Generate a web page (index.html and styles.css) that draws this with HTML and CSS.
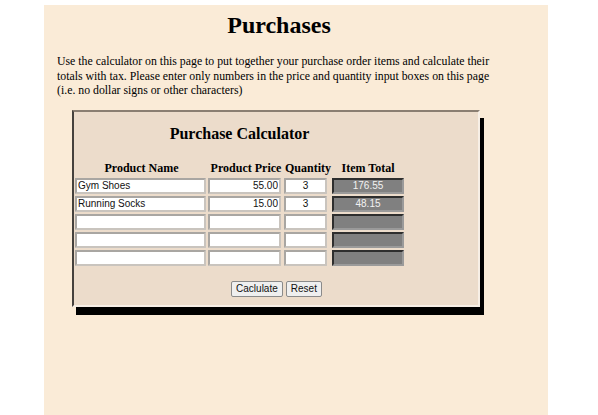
FILE: index.html
```html
<!DOCTYPE html>
<html>
<head>
<meta charset="utf-8">
<title>Purchases</title>
<link rel="stylesheet" href="styles.css">
</head>
<body>
<div class="page">
  <div class="content">
    <h1 class="title">Purchases</h1>
    <p class="intro">Use the calculator on this page to put together your purchase order items and calculate their totals with tax. Please enter only numbers in the price and quantity input boxes on this page (i.e. no dollar signs or other characters)</p>
  </div>
  <div class="calc">
    <div class="calc-table">
      <h2 class="calc-title">Purchase Calculator</h2>
      <div class="grid">
        <div class="th">Product Name</div>
        <div class="th">Product Price</div>
        <div class="th">Quantity</div>
        <div class="th">Item Total</div>

        <input class="in name" type="text" value="Gym Shoes">
        <input class="in price" type="text" value="55.00">
        <input class="in qty" type="text" value="3">
        <input class="in total" type="text" value="176.55" readonly>

        <input class="in name" type="text" value="Running Socks">
        <input class="in price" type="text" value="15.00">
        <input class="in qty" type="text" value="3">
        <input class="in total" type="text" value="48.15" readonly>

        <input class="in name" type="text" value="">
        <input class="in price" type="text" value="">
        <input class="in qty" type="text" value="">
        <input class="in total" type="text" value="" readonly>

        <input class="in name" type="text" value="">
        <input class="in price" type="text" value="">
        <input class="in qty" type="text" value="">
        <input class="in total" type="text" value="" readonly>

        <input class="in name" type="text" value="">
        <input class="in price" type="text" value="">
        <input class="in qty" type="text" value="">
        <input class="in total" type="text" value="" readonly>
      </div>
    </div>
    <div class="buttons">
      <button class="btn" type="button">Caclulate</button>
      <button class="btn" type="reset">Reset</button>
    </div>
  </div>
</div>
</body>
</html>
```

FILE: styles.css
```css
html, body {
  margin: 0;
  padding: 0;
  background: #ffffff;
}

.page {
  margin: 5px 0 0 44px;
  width: 504px;
  min-height: 420px;
  background: #faebd7;
  padding-top: 6px;
  box-sizing: border-box;
  font-family: "Liberation Serif", "Times New Roman", serif;
  color: #000;
}

.content {
  margin-left: 13px;
  width: 444px;
}

.title {
  margin: 0;
  font-size: 24px;
  line-height: 28px;
  font-weight: bold;
  text-align: center;
}

.intro {
  margin: 15px 0 0 0;
  width: 448px;
  font-size: 11.8px;
  line-height: 14.5px;
}

.calc {
  margin: 12px 0 0 28px;
  width: 408px;
  box-sizing: border-box;
  background: #ecdccb;
  border-style: solid;
  border-width: 2px;
  border-color: #8a7e72 #f7efe6 #f7efe6 #45413d;
  box-shadow: 4px 8px 0 #000;
  padding: 13px 0 8px 1px;
}

.calc-table {
  width: 329px;
}

.calc-title {
  margin: 0;
  font-size: 16px;
  line-height: 18px;
  font-weight: bold;
  text-align: center;
}

.grid {
  margin-top: 17px;
  display: grid;
  grid-template-columns: 133px 76px 48px 72px;
  row-gap: 2px;
}

.th {
  font-size: 12px;
  line-height: 16px;
  font-weight: bold;
  text-align: center;
  white-space: nowrap;
  margin-bottom: 0;
}

.in {
  display: block;
  box-sizing: border-box;
  height: 16px;
  margin: 0;
  padding: 0 2px;
  font-family: "Liberation Sans", Arial, sans-serif;
  font-size: 10px;
  line-height: 12px;
  color: #111;
  background: #ffffff;
  border-style: solid;
  border-width: 2px;
  border-color: #a9a6a2 #c9c4be #c9c4be #a9a6a2;
  border-radius: 1px;
  outline: none;
}

.name {
  width: 131px;
  padding-left: 1px;
}

.price {
  width: 73px;
  text-align: right;
  padding-right: 1px;
}

.qty {
  width: 43px;
  text-align: center;
}

.total {
  width: 72px;
  text-align: center;
  background: #808080;
  color: #f2f2f2;
  border-color: #2e2e2e #9a9a9a #9a9a9a #2e2e2e;
  border-radius: 0;
}

.buttons {
  margin-top: 15px;
  display: flex;
  justify-content: center;
  gap: 3px;
}

.btn {
  height: 16px;
  margin: 0;
  padding: 0 4px;
  font-family: "Liberation Sans", Arial, sans-serif;
  font-size: 10px;
  line-height: 12px;
  color: #111;
  background: #efefef;
  border: 1px solid #8a8a8a;
  border-radius: 2px;
}
```
